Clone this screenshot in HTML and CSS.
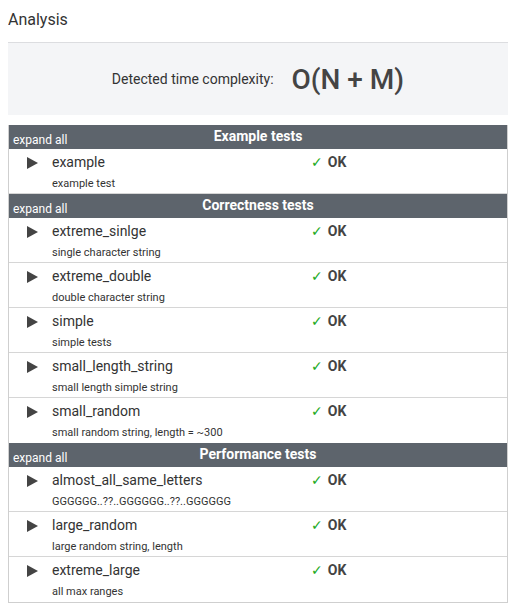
FILE: index.html
```html
<!DOCTYPE html>
<html>
<head>
<meta charset="utf-8">
<link rel="stylesheet" href="styles.css">
</head>
<body>
<div class="page">
  <h2 class="title">Analysis</h2>
  <div class="complexity">
    <span class="c-label">Detected time complexity:</span>
    <span class="c-value">O(N + M)</span>
  </div>
  <div class="tests">
    <div class="group-head"><span class="expand">expand all</span><span class="group-title">Example tests</span></div>
    <div class="row"><span class="arrow"><svg width="11" height="12" viewBox="0 0 11 12"><polygon points="0,0 11,6 0,12" fill="#444"/></svg></span><div class="info"><div class="name">example</div><div class="desc">example test</div></div><div class="status"><span class="check">✓</span><span class="ok">OK</span></div></div>

    <div class="group-head"><span class="expand">expand all</span><span class="group-title">Correctness tests</span></div>
    <div class="row"><span class="arrow"><svg width="11" height="12" viewBox="0 0 11 12"><polygon points="0,0 11,6 0,12" fill="#444"/></svg></span><div class="info"><div class="name">extreme_sinlge</div><div class="desc">single character string</div></div><div class="status"><span class="check">✓</span><span class="ok">OK</span></div></div>
    <div class="row"><span class="arrow"><svg width="11" height="12" viewBox="0 0 11 12"><polygon points="0,0 11,6 0,12" fill="#444"/></svg></span><div class="info"><div class="name">extreme_double</div><div class="desc">double character string</div></div><div class="status"><span class="check">✓</span><span class="ok">OK</span></div></div>
    <div class="row"><span class="arrow"><svg width="11" height="12" viewBox="0 0 11 12"><polygon points="0,0 11,6 0,12" fill="#444"/></svg></span><div class="info"><div class="name">simple</div><div class="desc">simple tests</div></div><div class="status"><span class="check">✓</span><span class="ok">OK</span></div></div>
    <div class="row"><span class="arrow"><svg width="11" height="12" viewBox="0 0 11 12"><polygon points="0,0 11,6 0,12" fill="#444"/></svg></span><div class="info"><div class="name">small_length_string</div><div class="desc">small length simple string</div></div><div class="status"><span class="check">✓</span><span class="ok">OK</span></div></div>
    <div class="row last"><span class="arrow"><svg width="11" height="12" viewBox="0 0 11 12"><polygon points="0,0 11,6 0,12" fill="#444"/></svg></span><div class="info"><div class="name">small_random</div><div class="desc">small random string, length = ~300</div></div><div class="status"><span class="check">✓</span><span class="ok">OK</span></div></div>

    <div class="group-head"><span class="expand">expand all</span><span class="group-title">Performance tests</span></div>
    <div class="row"><span class="arrow"><svg width="11" height="12" viewBox="0 0 11 12"><polygon points="0,0 11,6 0,12" fill="#444"/></svg></span><div class="info"><div class="name">almost_all_same_letters</div><div class="desc">GGGGGG..??..GGGGGG..??..GGGGGG</div></div><div class="status"><span class="check">✓</span><span class="ok">OK</span></div></div>
    <div class="row"><span class="arrow"><svg width="11" height="12" viewBox="0 0 11 12"><polygon points="0,0 11,6 0,12" fill="#444"/></svg></span><div class="info"><div class="name">large_random</div><div class="desc">large random string, length</div></div><div class="status"><span class="check">✓</span><span class="ok">OK</span></div></div>
    <div class="row last"><span class="arrow"><svg width="11" height="12" viewBox="0 0 11 12"><polygon points="0,0 11,6 0,12" fill="#444"/></svg></span><div class="info"><div class="name">extreme_large</div><div class="desc">all max ranges</div></div><div class="status"><span class="check">✓</span><span class="ok">OK</span></div></div>
  </div>
</div>
</body>
</html>
```
FILE: styles.css
```css
html, body {
  margin: 0;
  padding: 0;
  background: #fff;
}
body {
  margin: 8px;
  font-family: Roboto, "Liberation Sans", sans-serif;
  color: #333;
}
.page {
  width: 500px;
}
.title {
  margin: 0;
  padding: 2px 0 12px 0;
  font-size: 16px;
  line-height: 20px;
  font-weight: 400;
  color: #333;
  border-bottom: 1px solid #dcdde0;
}
.complexity {
  height: 72px;
  background: #f4f5f7;
  display: flex;
  align-items: center;
  justify-content: center;
  gap: 18px;
}
.c-label {
  font-size: 14px;
  color: #333;
}
.c-value {
  font-size: 28px;
  font-weight: 500;
  color: #444;
}
.tests {
  margin-top: 10px;
  border: 1px solid #cfcfcf;
  border-top: none;
}
.group-head {
  height: 24px;
  background: #5d646c;
  color: #fff;
  display: flex;
  align-items: center;
  position: relative;
}
.expand {
  font-size: 12px;
  padding-left: 4px;
  padding-top: 5px;
}
.group-title {
  position: absolute;
  left: 0;
  right: 0;
  top: 0;
  line-height: 23px;
  text-align: center;
  font-size: 14px;
  font-weight: 700;
  pointer-events: none;
}
.row {
  height: 44px;
  border-bottom: 1px solid #d6d6d6;
  display: grid;
  grid-template-columns: 43px 259px 1fr;
  align-items: start;
}
.row.last {
  border-bottom: none;
  height: 45px;
}
.arrow {
  padding-top: 8px;
  padding-left: 18px;
  display: block;
  line-height: 0;
}
.info {
  padding-top: 5px;
}
.name {
  font-size: 14px;
  line-height: 17px;
  color: #333;
}
.desc {
  font-size: 11px;
  line-height: 13px;
  margin-top: 6px;
  color: #333;
}
.status {
  padding-top: 5px;
  display: flex;
  align-items: baseline;
  gap: 5px;
  line-height: 17px;
}
.check {
  font-family: "DejaVu Sans", sans-serif;
  font-size: 14px;
  font-weight: 700;
  color: #22aa22;
}
.ok {
  font-size: 14px;
  font-weight: 700;
  color: #444;
}
```
